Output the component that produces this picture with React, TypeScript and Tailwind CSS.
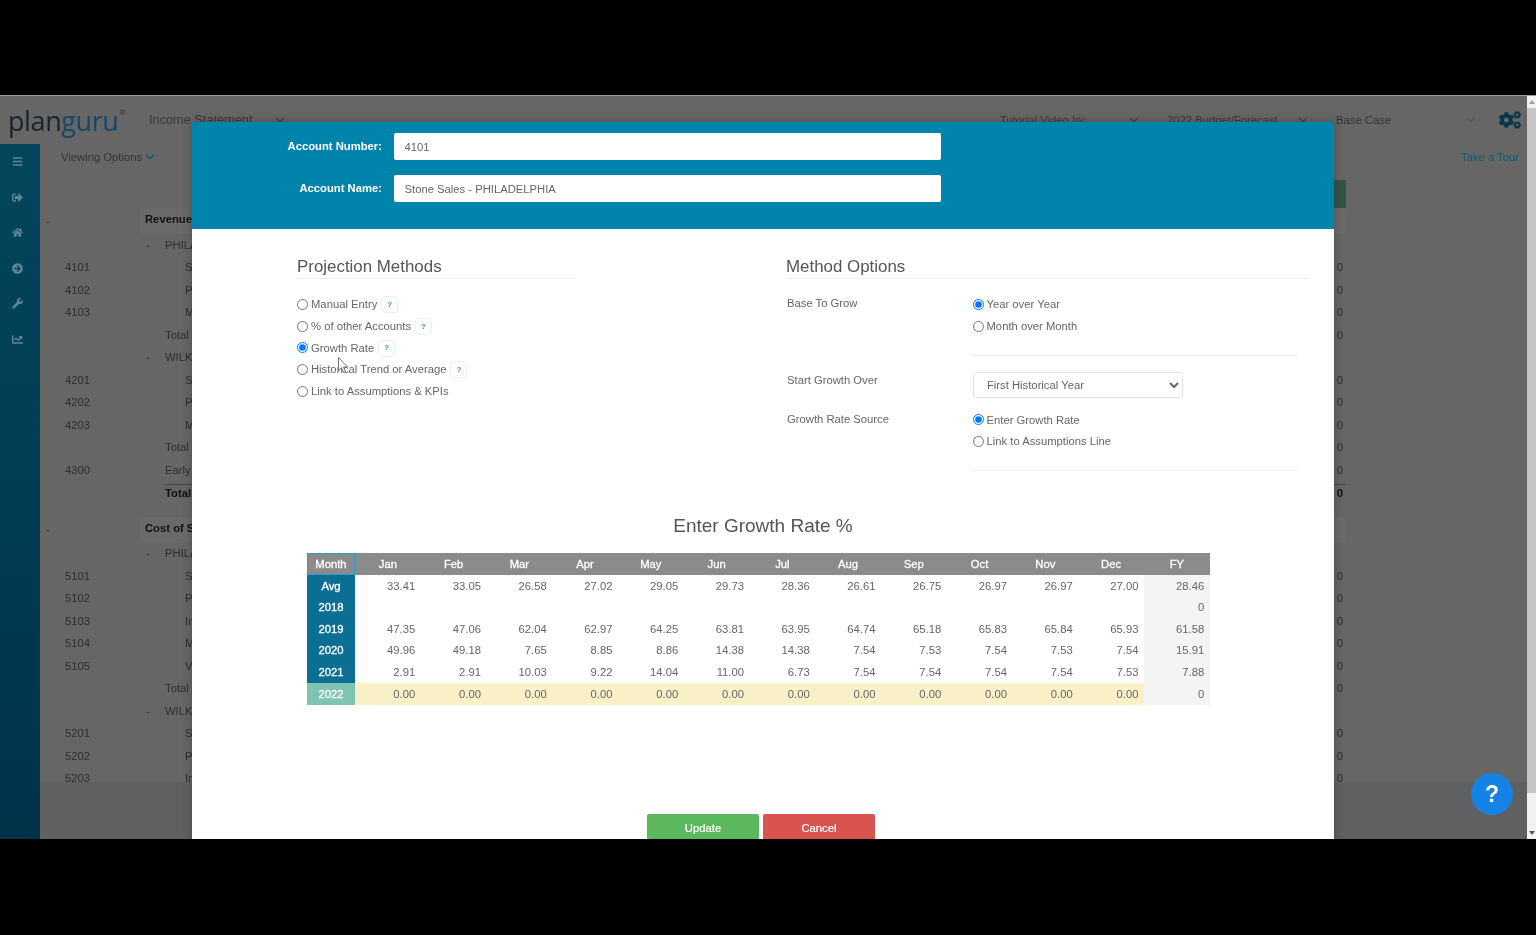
import { ChevronDown } from "lucide-react";
import {
  FaArrowCircleRight,
  FaBars,
  FaChartLine,
  FaCogs,
  FaHome,
  FaSignOutAlt,
  FaWrench,
} from "react-icons/fa";

const months = ["Jan", "Feb", "Mar", "Apr", "May", "Jun", "Jul", "Aug", "Sep", "Oct", "Nov", "Dec", "FY"];

const rows = [
  { year: "Avg", values: ["33.41", "33.05", "26.58", "27.02", "29.05", "29.73", "28.36", "26.61", "26.75", "26.97", "26.97", "27.00", "28.46"] },
  { year: "2018", values: ["", "", "", "", "", "", "", "", "", "", "", "", "0"] },
  { year: "2019", values: ["47.35", "47.06", "62.04", "62.97", "64.25", "63.81", "63.95", "64.74", "65.18", "65.83", "65.84", "65.93", "61.58"] },
  { year: "2020", values: ["49.96", "49.18", "7.65", "8.85", "8.86", "14.38", "14.38", "7.54", "7.53", "7.54", "7.53", "7.54", "15.91"] },
  { year: "2021", values: ["2.91", "2.91", "10.03", "9.22", "14.04", "11.00", "6.73", "7.54", "7.54", "7.54", "7.54", "7.53", "7.88"] },
  { year: "2022", values: ["0.00", "0.00", "0.00", "0.00", "0.00", "0.00", "0.00", "0.00", "0.00", "0.00", "0.00", "0.00", "0"] },
];

function BgRow({ code, dash, name, kind, zero = true }: { code?: string; dash?: boolean; name: string; kind: "group" | "item" | "total" | "grand"; zero?: boolean }) {
  return (
    <div className={`flex h-[22.5px] items-center text-[11.25px] ${kind === "grand" ? "font-bold text-[#111]" : "text-[#2e2e2e]"}`}>
      <div className="w-[105px] pl-[25px]">{code}</div>
      <div className="w-[20px] pl-[1px]">{dash ? "-" : ""}</div>
      <div className={`flex-1 ${kind === "item" ? "pl-[20px]" : ""} ${kind === "grand" ? "border-t border-[#444]" : ""}`}>{name}</div>
      <div className={`w-[12px] pr-[3px] text-right ${kind === "grand" ? "border-t border-[#444]" : ""}`}>{zero ? "0" : ""}</div>
    </div>
  );
}

function Section({ title, mt }: { title: string; mt: string }) {
  return (
    <div className={`flex h-[26px] items-center text-[11.25px] font-bold text-[#111] ${mt}`}>
      <div className="w-[6px] font-normal text-[#333]">-</div>
      <div className="ml-[88px] flex h-full flex-1 items-center rounded-[3px] bg-[#6a6a6a] pb-[3px] pl-[5px]">{title}</div>
    </div>
  );
}

function Help() {
  return (
    <span className="ml-[4px] flex h-[17px] w-[17px] items-center justify-center rounded-[4px] border border-[#e8eef2] text-[8px] font-bold text-[#3a94b8]">
      ?
    </span>
  );
}

function Radio({ label, checked, help }: { label: string; checked?: boolean; help?: boolean }) {
  return (
    <div className="flex h-[21.7px] items-center">
      <input type="radio" checked={!!checked} readOnly className="m-0 mb-[1px] h-[11px] w-[11px]" />
      <span className="ml-[3px] text-[11.25px] text-[#666]">{label}</span>
      {help && <Help />}
    </div>
  );
}

export default function App() {
  return (
    <div className="flex h-[935px] w-[1536px] flex-col overflow-hidden bg-black font-['Liberation_Sans',Arial,sans-serif]">
      <div className="h-[95px] shrink-0" />

      <div className="relative flex h-[744px] shrink-0 overflow-hidden border-t border-[#9a9a9a] bg-[#666666] blur-[0.4px]">
        <div className="flex w-[1527px] shrink-0 flex-col">
          {/* top bar */}
          <div className="flex h-[48px] shrink-0 items-center">
            <div className="ml-[8px] flex w-[141px] items-start font-['Open_Sans',sans-serif] text-[27px] leading-none font-medium tracking-[-0.4px]">
              <span className="text-[#16232d]">plan</span>
              <span className="text-[#17466a]">guru</span>
              <span className="mt-[2px] ml-[1px] text-[7px] text-[#333]">®</span>
            </div>
            <span className="w-[124px] text-[12.75px] text-[#3a3a3a]">Income Statement</span>
            <ChevronDown className="h-[14px] w-[14px] text-[#444]" />
            <span className="ml-[713px] w-[127px] text-[11.25px] text-[#3a3a3a]">Tutorial Video Inc</span>
            <ChevronDown className="h-[14px] w-[14px] text-[#444]" />
            <span className="ml-[26px] w-[129px] text-[11.25px] text-[#3a3a3a]">2022 Budget/Forecast</span>
            <ChevronDown className="h-[14px] w-[14px] text-[#444]" />
            <span className="ml-[26px] w-[128px] text-[11.25px] text-[#333]">Base Case</span>
            <ChevronDown className="h-[14px] w-[14px] text-[#555]" />
            <FaCogs className="ml-[21px] h-[20px] w-[22px] text-[#06344c]" />
          </div>

          <div className="flex min-h-0 flex-1">
            {/* sidebar */}
            <div className="flex w-[40px] shrink-0 flex-col items-center gap-[24.5px] bg-linear-to-b from-[#03465c] to-[#00324a] pt-[12px] pr-[5px] text-[#5c8797]">
              <FaBars className="h-[11px] w-[11px]" />
              <FaSignOutAlt className="h-[11px] w-[11px]" />
              <FaHome className="h-[11px] w-[11px]" />
              <FaArrowCircleRight className="h-[11px] w-[11px]" />
              <FaWrench className="h-[11px] w-[11px]" />
              <FaChartLine className="h-[11px] w-[11px]" />
            </div>

            {/* statement behind the dialog */}
            <div className="flex min-w-0 flex-1 flex-col">
              <div className="h-[638px] shrink-0 overflow-hidden">
                <div className="flex h-[26px] items-center pr-[8px]">
                  <span className="ml-[21px] text-[11.25px] text-[#333]">Viewing Options</span>
                  <ChevronDown className="ml-[1px] h-[14px] w-[14px] text-[#0c5a7c]" strokeWidth={2.5} />
                  <span className="ml-auto text-[11.25px] text-[#135a70]">Take a Tour</span>
                </div>
                <div className="flex h-[38px] items-start justify-end pr-[181px]">
                  <div className="mt-[10px] h-[28px] w-[12px] bg-[#35544a]" />
                </div>
                <div className="w-[1306px]">
                  <Section title="Revenue" mt="pl-[6px]" />
                  <BgRow dash name="PHILADELPHIA" kind="group" zero={false} />
                  <BgRow code="4101" name="Stone Sales" kind="item" />
                  <BgRow code="4102" name="Pebble Sales" kind="item" />
                  <BgRow code="4103" name="Mulch Sales" kind="item" />
                  <BgRow name="Total PHILADELPHIA" kind="group" />
                  <BgRow dash name="WILKES" kind="group" zero={false} />
                  <BgRow code="4201" name="Stone Sales" kind="item" />
                  <BgRow code="4202" name="Pebble Sales" kind="item" />
                  <BgRow code="4203" name="Mulch Sales" kind="item" />
                  <BgRow name="Total WILKES" kind="group" />
                  <BgRow code="4300" name="Early Pay Discounts" kind="group" />
                  <BgRow name="Total Revenue" kind="grand" />
                  <Section title="Cost of Sales" mt="mt-[12.5px] pl-[6px]" />
                  <BgRow dash name="PHILADELPHIA" kind="group" zero={false} />
                  <BgRow code="5101" name="Stone" kind="item" />
                  <BgRow code="5102" name="Pebble" kind="item" />
                  <BgRow code="5103" name="Inbound" kind="item" />
                  <BgRow code="5104" name="Mulch" kind="item" />
                  <BgRow code="5105" name="Vehicle" kind="item" />
                  <BgRow name="Total PHILADELPHIA" kind="group" zero />
                  <BgRow dash name="WILKES" kind="group" zero={false} />
                  <BgRow code="5201" name="Stone" kind="item" />
                  <BgRow code="5202" name="Pebble" kind="item" />
                  <BgRow code="5203" name="Inbound" kind="item" />
                </div>
              </div>
              <div className="flex-1 bg-[#5f6062]" />
            </div>
          </div>
        </div>

        {/* scrollbar */}
        <div className="flex w-[9px] shrink-0 flex-col bg-[#f1f1f1]">
          <div className="flex h-[12px] items-center justify-center">
            <div className="h-0 w-0 border-x-[3px] border-b-[4px] border-x-transparent border-b-[#a3a3a3]" />
          </div>
          <div className="h-[685px] bg-[#c6c6c6]" />
          <div className="flex flex-1 items-end justify-center pb-[4px]">
            <div className="h-0 w-0 border-x-[3px] border-t-[4px] border-x-transparent border-t-[#555]" />
          </div>
        </div>

        {/* dialog */}
        <div className="absolute top-[26px] left-[192px] h-[760px] w-[1142px] bg-white shadow-[0_0_10px_rgba(0,0,0,0.25)]">
          <div className="flex h-[107px] flex-col gap-[15px] bg-[#0084ab] pt-[11px]">
            <div className="flex items-center">
              <label className="w-[190px] text-right text-[11.25px] font-bold text-white">Account Number:</label>
              <input readOnly value="4101" className="ml-[12px] h-[27px] w-[547px] rounded-[2px] bg-white pl-[10.5px] text-[11.25px] text-[#666]" />
            </div>
            <div className="flex items-center">
              <label className="w-[190px] text-right text-[11.25px] font-bold text-white">Account Name:</label>
              <input readOnly value="Stone Sales - PHILADELPHIA" className="ml-[12px] h-[27px] w-[547px] rounded-[2px] bg-white pl-[10.5px] text-[11.25px] text-[#666]" />
            </div>
          </div>

          <div className="flex pt-[25px] pl-[105px]">
            <div className="w-[279px]">
              <h3 className="h-[25px] border-b border-[#eeeeee] text-[16.9px] leading-[26px] text-[#555]">Projection Methods</h3>
              <div className="mt-[15px]">
                <Radio label="Manual Entry" help />
                <Radio label="% of other Accounts" help />
                <Radio label="Growth Rate" checked help />
                <Radio label="Historical Trend or Average" help />
                <Radio label="Link to Assumptions & KPIs" />
              </div>
            </div>

            <div className="ml-[210px] w-[524px]">
              <h3 className="h-[25px] border-b border-[#eeeeee] text-[16.9px] leading-[26px] text-[#555]">Method Options</h3>
              <div className="mt-[15px] flex">
                <div className="w-[186px] pl-[1px] text-[11.25px] leading-[18px] text-[#666]">Base To Grow</div>
                <div className="w-[326px]">
                  <div className="pl-[0.5px]">
                    <Radio label="Year over Year" checked />
                    <Radio label="Month over Month" />
                  </div>
                  <div className="mt-[18px] border-b border-[#eeeeee]" />
                </div>
              </div>
              <div className="mt-[16px] flex">
                <div className="w-[187px] pl-[1px] pt-[1px] text-[11.25px] leading-[14px] text-[#666]">Start Growth Over</div>
                <select className="h-[26px] w-[210px] rounded-[3px] border border-[#e2e2e2] bg-white pl-[9px] text-[11.25px] text-[#666]">
                  <option>First Historical Year</option>
                </select>
              </div>
              <div className="mt-[11px] flex">
                <div className="w-[186px] pl-[1px] text-[11.25px] leading-[21px] text-[#666]">Growth Rate Source</div>
                <div className="w-[326px]">
                  <div className="pl-[0.5px]">
                    <Radio label="Enter Growth Rate" checked />
                    <Radio label="Link to Assumptions Line" />
                  </div>
                  <div className="mt-[17px] border-b border-[#eeeeee]" />
                </div>
              </div>
            </div>
          </div>

          <h2 className="mt-[43px] h-[24px] text-center text-[19px] leading-[24px] text-[#555]">Enter Growth Rate %</h2>

          {/* growth table */}
          <div className="mt-[15px] ml-[115px] grid w-[903px] grid-cols-[48px_repeat(13,65.75px)] text-[11.25px]">
            <div className="flex h-[22.5px] items-center justify-center border-[1.5px] border-[#2b9bd3] bg-[#8b8b8b] text-white [-webkit-text-stroke:0.3px_white]">Month</div>
            {months.map((m) => (
              <div key={m} className="flex h-[22.5px] items-center justify-center bg-[#8b8b8b] text-white [-webkit-text-stroke:0.3px_white]">
                {m}
              </div>
            ))}
            {rows.map((r) => (
              <div key={r.year} className="contents">
                <div className={`flex h-[21.6px] items-center justify-center text-white [-webkit-text-stroke:0.3px_white] ${r.year === "2022" ? "bg-[#7fc3b3]" : "bg-[#0b6f94]"}`}>
                  {r.year}
                </div>
                {r.values.map((v, i) => (
                  <div
                    key={i}
                    className={`flex h-[21.6px] items-center justify-end pr-[5.5px] text-[#666] ${i === 12 ? "bg-[#f4f4f4]" : r.year === "2022" ? "bg-[#f9f0c8]" : "bg-white"}`}
                  >
                    {v}
                  </div>
                ))}
              </div>
            ))}
          </div>

          <div className="mt-[109.5px] ml-[455px] flex gap-[4px]">
            <button className="h-[28px] w-[112px] rounded-[2px] bg-[#5cb85c] text-[11.25px] text-white [-webkit-text-stroke:0.2px_white]">Update</button>
            <button className="h-[28px] w-[112px] rounded-[2px] bg-[#d9534f] text-[11.25px] text-white [-webkit-text-stroke:0.2px_white]">Cancel</button>
          </div>
        </div>

        {/* mouse pointer */}
        <svg className="absolute top-[261px] left-[338px]" width="11" height="17" viewBox="0 0 11 17">
          <path d="M0.5 0.5 L0.5 13.5 L3.5 10.8 L5.7 15.5 L7.6 14.6 L5.5 10 L9.6 10 Z" fill="#fff" stroke="#555" strokeWidth="0.8" />
        </svg>

        {/* help button */}
        <div className="absolute top-[677px] left-[1471px] flex h-[42px] w-[42px] items-center justify-center rounded-full bg-[#1582e6] text-[23px] font-bold text-white">
          ?
        </div>
      </div>

      <div className="flex-1" />
    </div>
  );
}
